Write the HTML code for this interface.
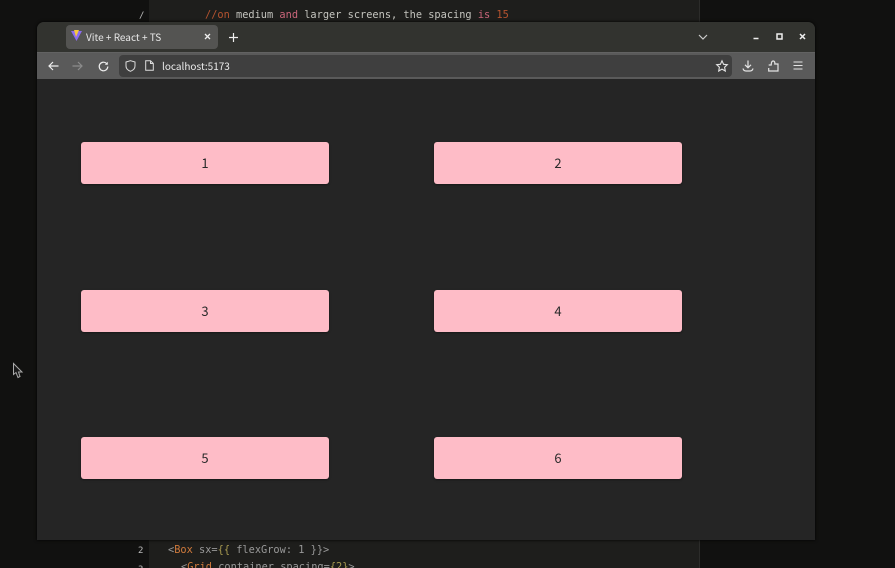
<!DOCTYPE html>
<html><head><meta charset="utf-8">
<style>
html,body{margin:0;padding:0;width:895px;height:568px;overflow:hidden;background:#111110}
#root{position:relative;width:895px;height:568px;overflow:hidden;background:#111110;font-family:"Liberation Sans","Noto Sans CJK SC",sans-serif}
.abs{position:absolute}
#ed{left:149px;top:0;width:550px;height:568px;background:#1e1e1c;border-right:1px solid #2c2c2a}
.code{position:absolute;font:10.3px/14px "DejaVu Sans Mono","Liberation Mono",monospace;white-space:pre;color:#c4c4be}
.ln{position:absolute;font:9px/12px "DejaVu Sans Mono",monospace;color:#bbb}
#win{left:37px;top:22px;width:778px;height:518px;background:#252525;border-radius:7px 7px 0 0;box-shadow:0 0 3px #000;overflow:hidden}
#tabs{left:0;top:0;width:778px;height:30px;background:#32332f}
#tab{left:29px;top:3px;width:152px;height:24px;background:#545452;border-radius:4px}
#tab span{position:absolute;left:20px;top:4px;font-family:"Noto Sans CJK SC",sans-serif;font-size:10px;line-height:16px;color:#e8e8e8;white-space:nowrap}
#nav{left:0;top:30px;width:778px;height:27px;background:#5a5a5a;border-top:1px solid #626262;box-sizing:border-box}
#url{left:82px;top:2px;width:613px;height:22px;background:#3f3f3f;border-radius:4px}
#url span{position:absolute;left:43px;top:3px;font-family:"Noto Sans CJK SC",sans-serif;font-size:10px;line-height:16px;color:#ececec}
.card{position:absolute;width:248px;height:42px;background:#febcc7;border-radius:3px;box-shadow:0 1px 2px rgba(0,0,0,.4);text-align:center;font-family:"Noto Sans CJK SC",sans-serif;font-size:13px;line-height:41px;color:#2a2a2a}
svg{position:absolute;overflow:visible}
</style></head><body>
<div id="root">
<div id="ed" class="abs"></div>
<div class="ln" style="left:139px;top:10px">/</div>
<div class="code" style="left:205px;top:8px"><span style="color:#b5532f">//on</span> medium <span style="color:#c9657a">and</span> larger screens, the spacing <span style="color:#c9657a">is</span> <span style="color:#b5532f">15</span></div>
<div class="ln" style="left:138px;top:545px">2</div>
<div class="code" style="left:168px;top:543px;color:#999">&lt;<span style="color:#d07a3c">Box</span> sx=<span style="color:#a89a50">{{</span> flexGrow: 1 }}&gt;</div>
<div class="code" style="left:181px;top:560px;color:#999">&lt;<span style="color:#d07a3c">Grid</span> container spacing=<span style="color:#a89a50">{2}</span>&gt;</div>
<div class="ln" style="left:138px;top:564px">3</div>

<svg style="left:13px;top:363px" width="10" height="16" viewBox="0 0 10 16"><path d="M0.5 0.5V11.5L3 9.5L5 14.5L7 13.5L5.5 9H9Z" fill="#1a1a1a" stroke="#aaa" stroke-width="1"/></svg>

<div id="win" class="abs">
<div id="tabs" class="abs"></div>
<div id="tab" class="abs"><span>Vite + React + TS</span>
<svg style="left:5px;top:5px" width="11" height="12" viewBox="0 0 11 12"><path d="M0 1L5.500 11L11 1Z" fill="#8d6cf0"/><path d="M3 0H8L5 7Z" fill="#f8c83a"/></svg>
<svg style="left:138px;top:8px" width="7" height="7" viewBox="0 0 7 7"><path d="M1 1L6 6M6 1L1 6" stroke="#eee" stroke-width="1.300"/></svg>
</div>
<svg style="left:192px;top:11px" width="9" height="9" viewBox="0 0 9 9"><path d="M4.500 0V9M0 4.500H9" stroke="#eee" stroke-width="1.200"/></svg>
<svg style="left:661px;top:12px" width="10" height="6" viewBox="0 0 10 6"><path d="M1 1L5 5L9 1" fill="none" stroke="#ccc" stroke-width="1.200"/></svg>
<svg style="left:715px;top:15px" width="8" height="3" viewBox="0 0 8 3"><path d="M1.500 1.500H6.500" stroke="#eee" stroke-width="1.500"/></svg>
<svg style="left:739px;top:11px" width="7" height="7" viewBox="0 0 7 7"><rect x="1" y="1" width="5" height="5" fill="none" stroke="#eee" stroke-width="1.500"/></svg>
<svg style="left:762px;top:11px" width="7" height="7" viewBox="0 0 7 7"><path d="M1 1L6 6M6 1L1 6" stroke="#eee" stroke-width="1.500"/></svg>

<div id="nav" class="abs">
<div id="url" class="abs"><span>localhost:5173</span>
<svg style="left:6px;top:5px" width="11" height="12" viewBox="0 0 11 12"><path d="M5.500 .7L10 2V6C10 9 7.500 10.500 5.500 11.300C3.500 10.500 1 9 1 6V2Z" fill="none" stroke="#ddd" stroke-width="1"/></svg>
<svg style="left:26px;top:5px" width="9" height="11" viewBox="0 0 9 11"><path d="M.7 .7H5.500L8.300 3.500V10.300H.7ZM5.500 .7V3.500H8.300" fill="none" stroke="#ddd" stroke-width="1"/></svg>
<svg style="left:597px;top:5px" width="12" height="12" viewBox="0 0 12 12"><path d="M6 .8L7.600 4.300L11.300 4.700L8.600 7.200L9.300 11L6 9.100L2.700 11L3.400 7.200L.7 4.700L4.400 4.300Z" fill="none" stroke="#e4e4e4" stroke-width="1.100"/></svg>
</div>
<svg style="left:11px;top:8px" width="11" height="10" viewBox="0 0 11 10"><path d="M10.500 5H1M5 1L1 5L5 9" fill="none" stroke="#eee" stroke-width="1.200"/></svg>
<svg style="left:35px;top:8px" width="11" height="10" viewBox="0 0 11 10"><path d="M.5 5H10M6 1L10 5L6 9" fill="none" stroke="#8c8c8c" stroke-width="1.200"/></svg>
<svg style="left:60.500px;top:7.500px" width="11" height="11" viewBox="0 0 11 11"><path d="M9.800 5.500A4.300 4.300 0 1 1 8.500 2.400" fill="none" stroke="#eee" stroke-width="1.200"/><path d="M9.800 .8V3.800H6.800Z" fill="#eee"/></svg>
<svg style="left:705px;top:7px" width="12" height="12" viewBox="0 0 12 12"><path d="M6 .5V7.500M3 4.800L6 7.800L9 4.800M1 8.500C1.500 10.500 2.500 11 4 11H8C9.500 11 10.500 10.500 11 8.500" fill="none" stroke="#e4e4e4" stroke-width="1.200"/></svg>
<svg style="left:731px;top:7px" width="11" height="12" viewBox="0 0 11 12"><path d="M.7 5H3.200C3.200 3.500 3.500 1 5.200 1C6.800 1 7 3 6.800 4H10V11H.7V8" fill="none" stroke="#e4e4e4" stroke-width="1.200"/></svg>
<svg style="left:756px;top:8px" width="10" height="9" viewBox="0 0 10 9"><path d="M.5 1H9.500M.5 4.500H9.500M.5 8H9.500" stroke="#e4e4e4" stroke-width="1.100"/></svg>
</div>

<div class="card" style="left:44px;top:120px">1</div>
<div class="card" style="left:397px;top:120px">2</div>
<div class="card" style="left:44px;top:268px">3</div>
<div class="card" style="left:397px;top:268px">4</div>
<div class="card" style="left:44px;top:415px">5</div>
<div class="card" style="left:397px;top:415px">6</div>
</div>
</div>
</body></html>
